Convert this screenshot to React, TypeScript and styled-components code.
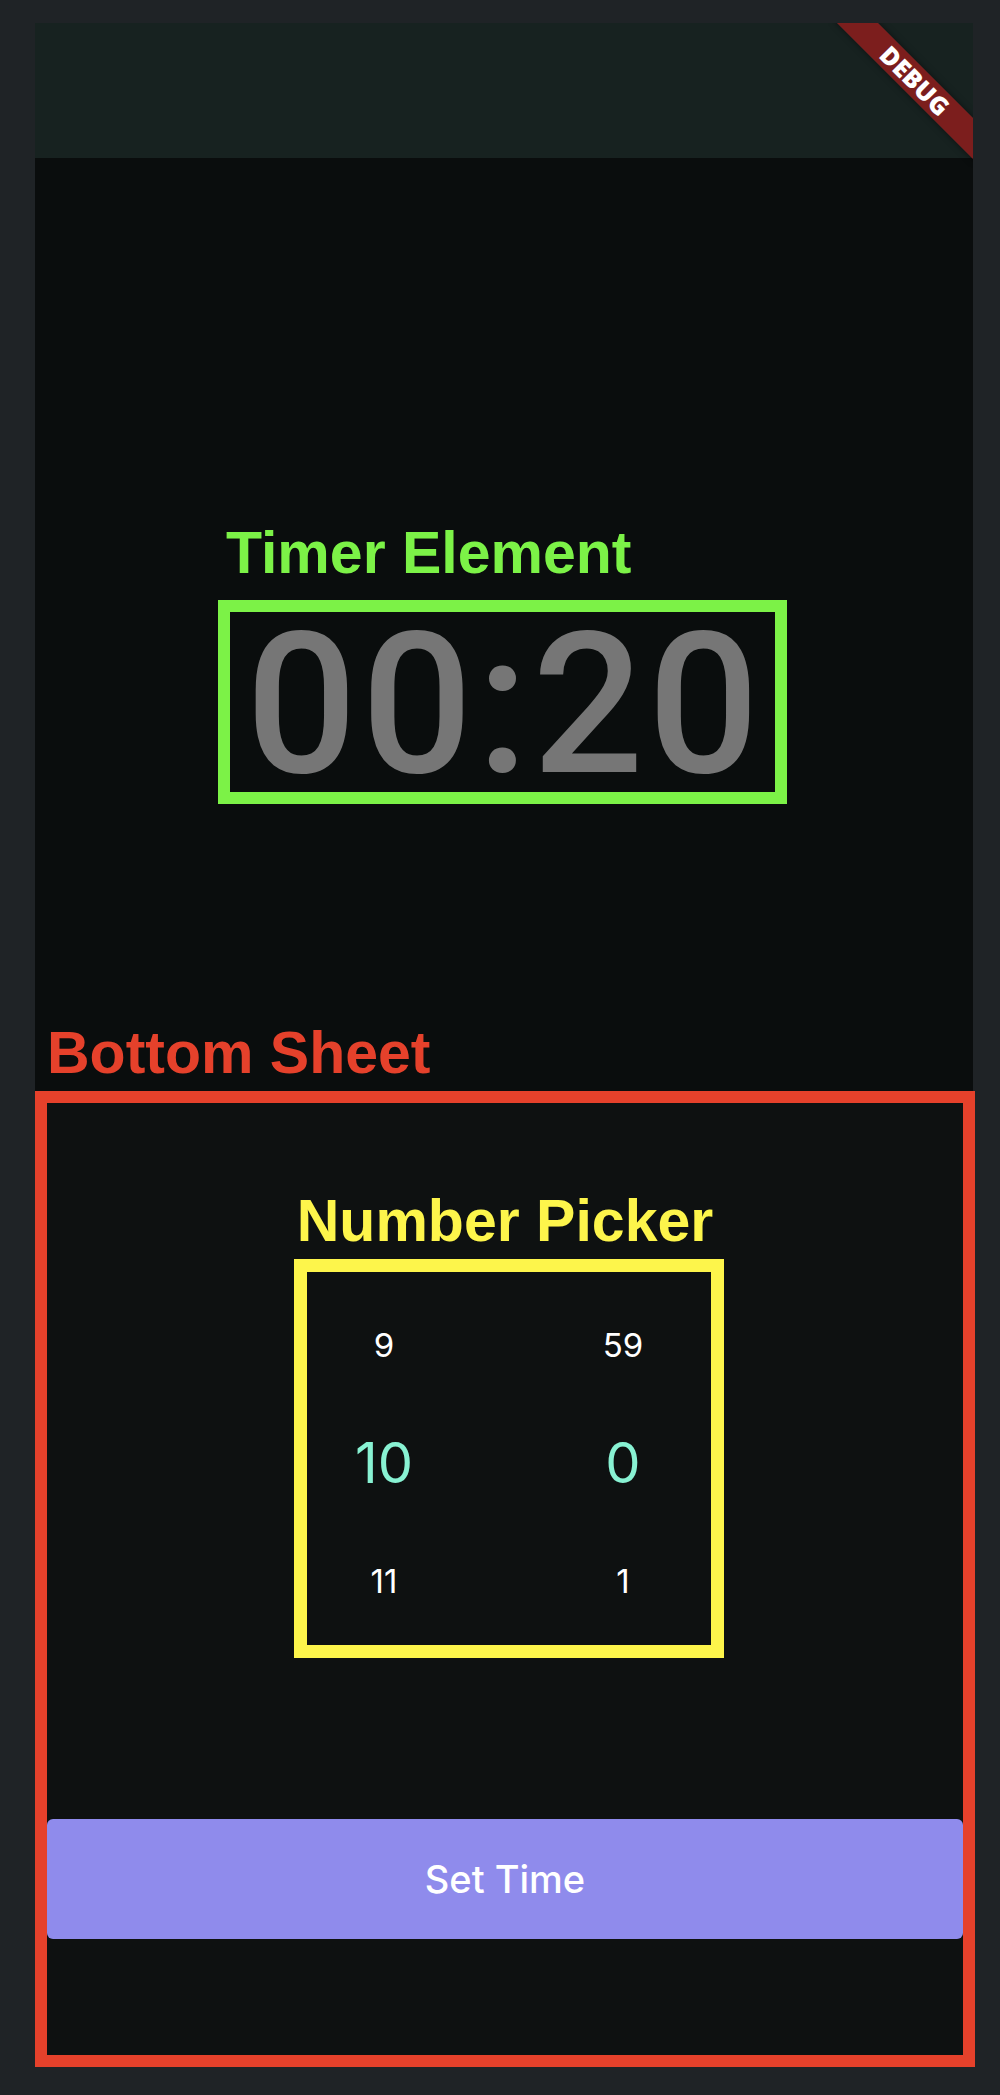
import React from "react";
import styled, { createGlobalStyle } from "styled-components";

const GlobalStyle = createGlobalStyle`
  html, body {
    margin: 0;
    padding: 0;
    background: #1f2326;
  }
  #root {
    min-height: 2095px;
  }
`;

const Page = styled.div`
  padding: 23px 0 28px 35px;
`;

const Phone = styled.div`
  position: relative;
  width: 938px;
  display: flex;
  flex-direction: column;
  background: #0a0d0d;
`;

const AppBar = styled.header`
  height: 135px;
  background: #172220;
`;

const BannerClip = styled.div`
  position: absolute;
  top: 0;
  right: 0;
  width: 160px;
  height: 160px;
  overflow: hidden;
  pointer-events: none;
`;

const Ribbon = styled.div`
  position: absolute;
  left: 2px;
  top: 42.5px;
  width: 200px;
  height: 29px;
  background: rgba(183, 28, 28, 0.63);
  box-shadow: 0 0 6px rgba(0, 0, 0, 0.5);
  transform: rotate(45deg);
  display: flex;
  align-items: center;
  justify-content: center;
  color: #ffffff;
  font-family: "Noto Sans", "Open Sans", sans-serif;
  font-weight: 900;
  font-size: 25px;
  line-height: 1;
`;

const Main = styled.main`
  height: 933px;
  box-sizing: border-box;
  padding-top: 366px;
  display: flex;
  flex-direction: column;
`;

const TimerGroup = styled.div`
  align-self: center;
  margin-right: 3px;
  display: flex;
  flex-direction: column;
  align-items: flex-start;
  gap: 17px;
`;

const SectionLabel = styled.div<{ $color: string }>`
  font-family: "Liberation Sans", Arial, sans-serif;
  font-weight: 700;
  font-size: 59px;
  line-height: 1;
  color: ${(p) => p.$color};
  white-space: nowrap;
`;

const TimerLabel = styled(SectionLabel)`
  margin-left: 8px;
`;

const TimerBox = styled.div`
  width: 569px;
  height: 204px;
  box-sizing: border-box;
  border: 12px solid #7cf247;
  padding-top: 6px;
  display: flex;
  align-items: center;
  justify-content: center;
`;

const TimerText = styled.div`
  font-family: Roboto, "Noto Sans", sans-serif;
  font-weight: 500;
  font-size: 196px;
  line-height: 1;
  letter-spacing: 4px;
  padding-left: 4px;
  color: #767676;
`;

const SheetLabel = styled(SectionLabel)`
  margin-top: auto;
  margin-left: 12px;
  margin-bottom: 8px;
`;

const Sheet = styled.section`
  width: 940px;
  height: 976px;
  box-sizing: border-box;
  border: 12px solid #e5412b;
  background: #0e1111;
  padding: 89px 0 116px;
  display: flex;
  flex-direction: column;
  align-items: center;
`;

const PickerLabel = styled(SectionLabel)`
  margin-bottom: 8px;
`;

const PickerBox = styled.div`
  width: 430px;
  height: 399px;
  box-sizing: border-box;
  margin-left: 8px;
  border: 13px solid #fdf54b;
  padding-top: 14px;
  display: grid;
  grid-template-columns: 154px 154px;
  column-gap: 85px;
  align-content: start;
`;

const PickerColumn = styled.div`
  display: flex;
  flex-direction: column;
`;

const PickerCell = styled.div<{ $selected?: boolean }>`
  height: 118px;
  display: flex;
  align-items: center;
  justify-content: center;
  font-family: Inter, "Liberation Sans", sans-serif;
  font-weight: 400;
  line-height: 1;
  font-size: ${(p) => (p.$selected ? "56px" : "33px")};
  color: ${(p) => (p.$selected ? "#88f2d3" : "#ffffff")};
`;

const SetButton = styled.button`
  margin-top: auto;
  align-self: stretch;
  height: 120px;
  border: none;
  border-radius: 6px;
  background: #8f8bec;
  color: #ffffff;
  font-family: Inter, "Liberation Sans", sans-serif;
  font-weight: 500;
  font-size: 38px;
  line-height: 1;
  cursor: pointer;
`;

const columns: { values: number[]; selected: number }[] = [
  { values: [9, 10, 11], selected: 1 },
  { values: [59, 0, 1], selected: 1 },
];

export default function App() {
  return (
    <>
      <GlobalStyle />
      <Page>
        <Phone>
          <AppBar />
          <BannerClip>
            <Ribbon>DEBUG</Ribbon>
          </BannerClip>
          <Main>
            <TimerGroup>
              <TimerLabel $color="#7cf247">Timer Element</TimerLabel>
              <TimerBox>
                <TimerText>00:20</TimerText>
              </TimerBox>
            </TimerGroup>
            <SheetLabel $color="#e5412b">Bottom Sheet</SheetLabel>
          </Main>
          <Sheet>
            <PickerLabel $color="#fdf54b">Number Picker</PickerLabel>
            <PickerBox>
              {columns.map((col, ci) => (
                <PickerColumn key={ci}>
                  {col.values.map((v, i) => (
                    <PickerCell key={i} $selected={i === col.selected}>
                      {v}
                    </PickerCell>
                  ))}
                </PickerColumn>
              ))}
            </PickerBox>
            <SetButton>Set Time</SetButton>
          </Sheet>
        </Phone>
      </Page>
    </>
  );
}
